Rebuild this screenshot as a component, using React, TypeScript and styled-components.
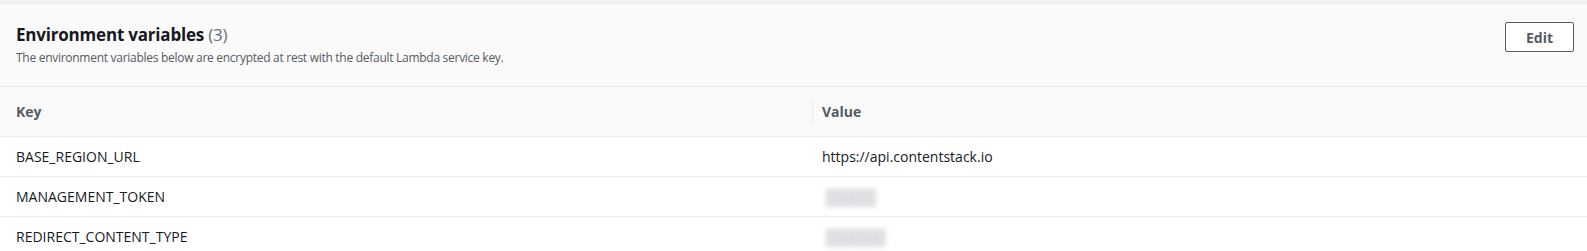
import React from "react";
import styled, { createGlobalStyle } from "styled-components";

const GlobalStyle = createGlobalStyle`
  html, body {
    margin: 0;
    padding: 0;
    background: #ffffff;
  }
  body {
    font-family: "Open Sans", "Noto Sans", Arial, sans-serif;
    color: #16191f;
  }
`;

interface EnvVar {
  key: string;
  value: string;
  hidden?: boolean;
  maskWidth?: number;
}

const variables: EnvVar[] = [
  { key: "BASE_REGION_URL", value: "https://api.contentstack.io" },
  { key: "MANAGEMENT_TOKEN", value: "xxxxxx", hidden: true, maskWidth: 50 },
  { key: "REDIRECT_CONTENT_TYPE", value: "xxxxxxxx", hidden: true, maskWidth: 60 },
];

export default function App() {
  return (
    <>
      <GlobalStyle />
      <Page>
        <Panel>
          <PanelHeader>
            <HeaderText>
              <Title>
                Environment variables <Count>({variables.length})</Count>
              </Title>
              <Description>
                The environment variables below are encrypted at rest with the default Lambda service key.
              </Description>
            </HeaderText>
            <EditButton>Edit</EditButton>
          </PanelHeader>

          <Table>
            <colgroup>
              <KeyCol />
              <col />
            </colgroup>
            <thead>
              <tr>
                <HeadCell>Key</HeadCell>
                <HeadCell divider>Value</HeadCell>
              </tr>
            </thead>
            <tbody>
              {variables.map((v) => (
                <Row key={v.key}>
                  <Cell>{v.key}</Cell>
                  <Cell value>
                    {v.hidden ? <Masked style={{ width: v.maskWidth }} /> : v.value}
                  </Cell>
                </Row>
              ))}
            </tbody>
          </Table>
        </Panel>
      </Page>
    </>
  );
}

const Page = styled.div`
  background-color: #f2f3f3;
  padding-top: 3px;
  height: 251px;
  overflow: hidden;
`;

const Panel = styled.section`
  background-color: #ffffff;
  border-top: 1px solid #eaeded;
`;

const PanelHeader = styled.div`
  display: flex;
  justify-content: space-between;
  align-items: flex-start;
  background-color: #fafafa;
  border-bottom: 1px solid #eaeded;
  padding: 14px 13px 0 16px;
  height: 68px;
`;

const HeaderText = styled.div`
  display: flex;
  flex-direction: column;
  padding-top: 5px;
`;

const Title = styled.h2`
  margin: 0;
  font-size: 17px;
  line-height: 24px;
  font-weight: 700;
  letter-spacing: -0.2px;
  color: #16191f;
`;

const Count = styled.span`
  font-weight: 400;
  color: #687078;
`;

const Description = styled.p`
  margin: 3px 0 0;
  font-size: 12px;
  line-height: 16px;
  letter-spacing: -0.28px;
  color: #545b64;
`;

const EditButton = styled.button`
  margin-top: 4px;
  width: 69px;
  height: 30px;
  border: 1px solid #545b64;
  border-radius: 2px;
  background-color: #ffffff;
  color: #545b64;
  font-family: inherit;
  font-size: 14px;
  font-weight: 700;
  cursor: pointer;
`;

const Table = styled.table`
  width: 100%;
  border-collapse: collapse;
  table-layout: fixed;
`;

const KeyCol = styled.col`
  width: 812px;
`;

const HeadCell = styled.th<{ divider?: boolean }>`
  position: relative;
  height: 49px;
  padding: 0 ${(p) => (p.divider ? "10px" : "16px")};
  text-align: left;
  font-size: 14px;
  font-weight: 700;
  color: #545b64;
  background-color: #fafafa;
  border-bottom: 1px solid #eaeded;

  &::before {
    content: "";
    display: ${(p) => (p.divider ? "block" : "none")};
    position: absolute;
    left: 0;
    top: 13px;
    bottom: 12px;
    border-left: 1px solid #eaeded;
  }
`;

const Row = styled.tr`
  height: 40px;
  & + & td {
    border-top: 1px solid #eaeded;
  }
`;

const Cell = styled.td<{ value?: boolean }>`
  padding: 0 ${(p) => (p.value ? "10px" : "16px")};
  font-size: 14px;
  color: #16191f;
  white-space: nowrap;
`;

const Masked = styled.span`
  display: inline-block;
  height: 18px;
  vertical-align: middle;
  background: repeating-linear-gradient(90deg, #d8dadd 0 3px, #e3e5e8 3px 6px);
  filter: blur(2.5px);
  margin-left: 4px;
`;
